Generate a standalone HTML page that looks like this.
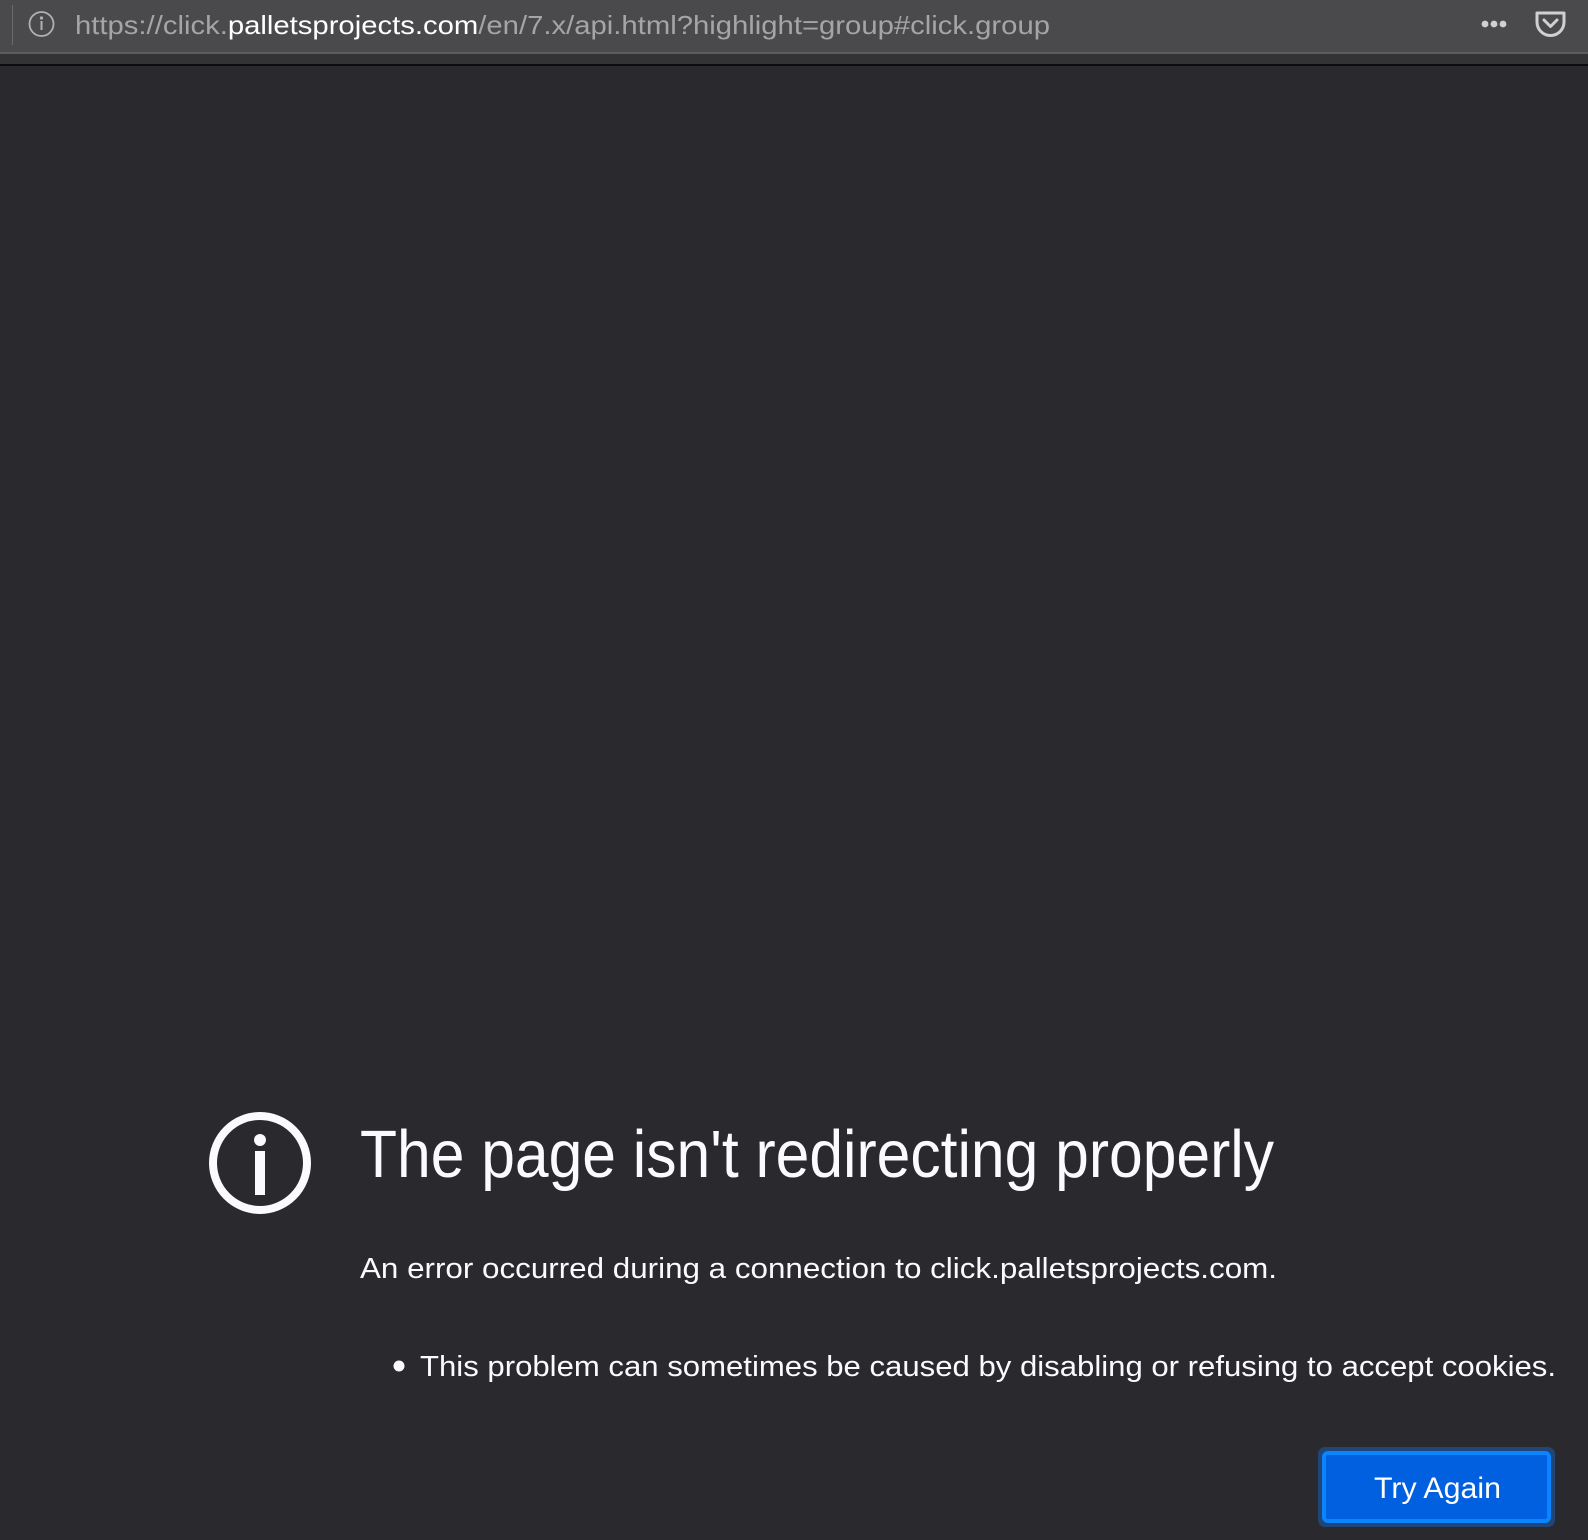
<!DOCTYPE html>
<html><head><meta charset="utf-8"><style>
html,body{margin:0;padding:0;background:#2a2a2e;width:1588px;height:1540px;overflow:hidden}
svg{display:block}
text{font-family:"Liberation Sans",sans-serif}
</style></head><body>
<svg width="1588" height="1540" viewBox="0 0 1588 1540" xmlns="http://www.w3.org/2000/svg">
<rect width="1588" height="1540" fill="#2a2a2e"/>
<rect width="1588" height="53" fill="#4a4a4d"/>
<rect y="52" width="1588" height="2" fill="#5c5c60"/>
<rect y="54" width="1588" height="10" fill="#333336"/>
<rect y="64" width="1588" height="2" fill="#0c0c0d"/>
<rect x="12" y="5" width="1" height="40" fill="#6a6a6e"/>
<circle cx="41.5" cy="24" r="12" fill="none" stroke="#b1b1b3" stroke-width="1.8"/>
<circle cx="41.5" cy="18" r="1.6" fill="#b1b1b3"/>
<rect x="40.5" y="21" width="2" height="9" fill="#b1b1b3"/>
<text x="75" y="34" font-size="26" fill="#a5a5a8" textLength="975" lengthAdjust="spacingAndGlyphs">https://click.<tspan fill="#fff">palletsprojects.com</tspan>/en/7.x/api.html?highlight=group#click.group</text>
<circle cx="1485" cy="24" r="3.4" fill="#d0d0d2"/><circle cx="1494" cy="24" r="3.4" fill="#d0d0d2"/><circle cx="1503" cy="24" r="3.4" fill="#d0d0d2"/>
<path d="M1537 13 h27 v9 a13.5 13.5 0 0 1 -27 0 z" fill="none" stroke="#d0d0d2" stroke-width="3" stroke-linejoin="round"/>
<path d="M1544 20 l6.5 6.5 l6.5 -6.5" fill="none" stroke="#d0d0d2" stroke-width="3" stroke-linecap="round" stroke-linejoin="round"/>
<circle cx="260" cy="1163" r="47" fill="none" stroke="#fbfbfe" stroke-width="8"/>
<circle cx="260" cy="1140" r="6" fill="#fbfbfe"/>
<rect x="255" y="1151" width="10" height="44" fill="#fbfbfe"/>
<text x="360" y="1177" font-size="67" fill="#fbfbfe" font-weight="300" textLength="914" lengthAdjust="spacingAndGlyphs">The page isn't redirecting properly</text>
<text x="360" y="1278" font-size="29" fill="#fbfbfe" textLength="917" lengthAdjust="spacingAndGlyphs">An error occurred during a connection to click.palletsprojects.com.</text>
<circle cx="399" cy="1366" r="5.5" fill="#fbfbfe"/>
<text x="420" y="1376" font-size="29" fill="#fbfbfe" textLength="1136" lengthAdjust="spacingAndGlyphs">This problem can sometimes be caused by disabling or refusing to accept cookies.</text>
<rect x="1318" y="1447" width="237" height="80" rx="7" fill="#1f4677"/>
<rect x="1324" y="1453" width="225" height="68" rx="4" fill="#0060df" stroke="#0a84ff" stroke-width="4"/>
<text x="1374" y="1498" font-size="30" fill="#fff" textLength="127" lengthAdjust="spacingAndGlyphs">Try Again</text>
</svg>
</body></html>
